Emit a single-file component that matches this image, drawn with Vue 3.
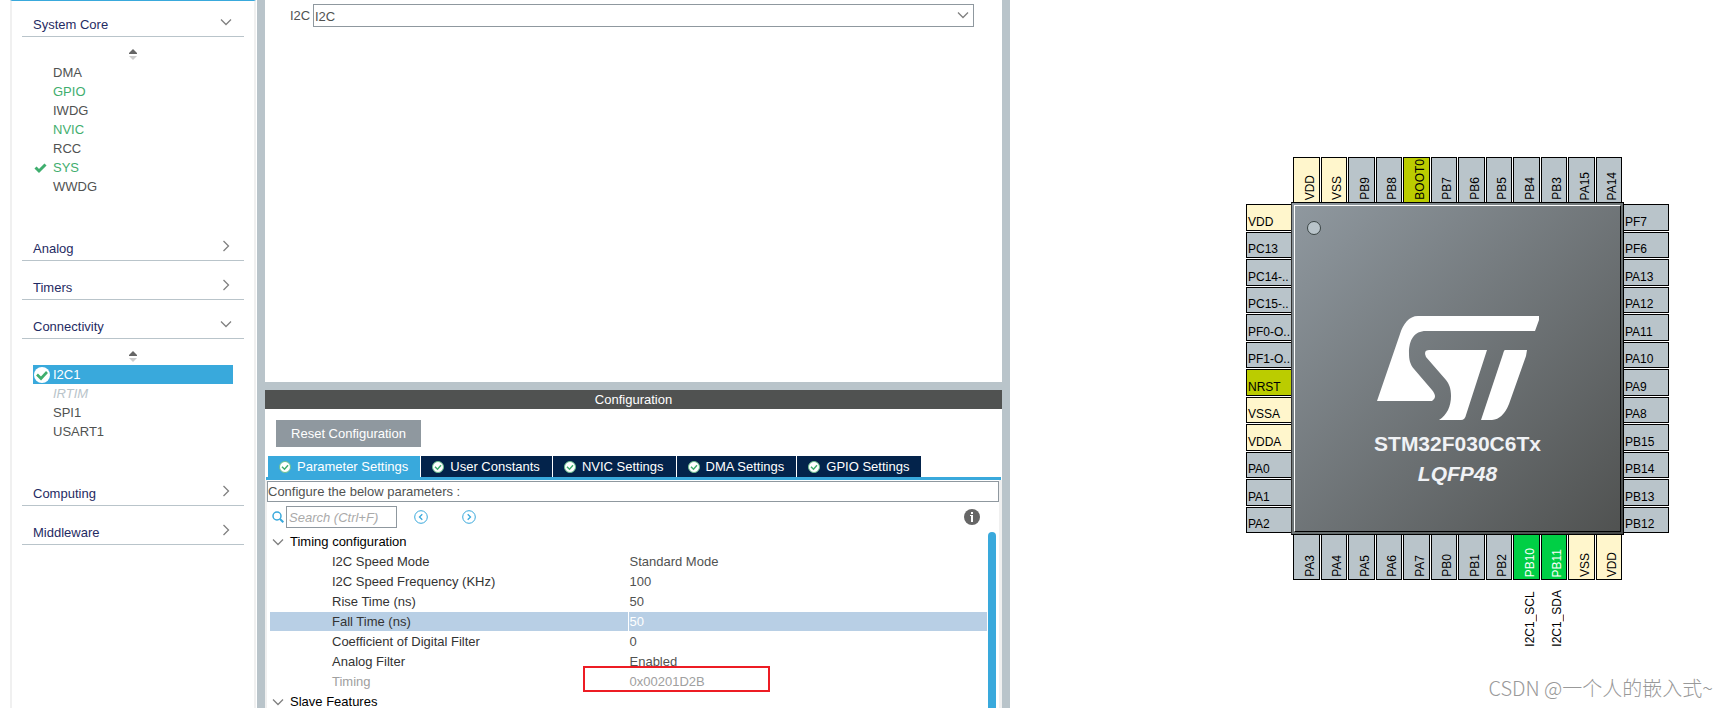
<template>
  <div class="workspace">
    <!-- Peripheral categories -->
    <nav class="sidebar">
      <section v-for="group in groups" :key="group.name" class="group">
        <button type="button" class="group-header" @click="group.open = !group.open">
          <span>{{ group.name }}</span>
          <svg class="chevron" :class="{ closed: !group.open }" width="12" height="12" viewBox="0 0 12 12">
            <path d="M1 3.5L6 8.5L11 3.5" />
          </svg>
        </button>
        <div v-if="group.open" class="group-body">
          <svg class="sorter" width="8" height="11" viewBox="0 0 8 11">
            <path d="M4 0L8 4V5H0V4Z" fill="#666" />
            <path d="M0 7H8L4 11Z" fill="#ccc" />
          </svg>
          <ul>
            <li v-for="item in group.items" :key="item.name">
              <button type="button" class="item" :class="item.state">
                <span class="item-icon">
                  <svg v-if="item.state === 'active'" width="16" height="16" viewBox="0 0 16 16">
                    <circle cx="8" cy="8" r="8" fill="#fff" />
                    <path d="M3 7.5L7 11.5L13 5" fill="none" stroke="#3fae6e" stroke-width="2.6" />
                  </svg>
                  <svg v-else-if="item.checked" width="16" height="16" viewBox="0 0 16 16">
                    <path d="M1.5 7.5L5 11L11.5 4.5" fill="none" stroke="#3fae6e" stroke-width="3" />
                  </svg>
                </span>
                {{ item.name }}
              </button>
            </li>
          </ul>
        </div>
      </section>
    </nav>

    <div class="divider"></div>

    <main class="center">
      <!-- Mode -->
      <section class="mode">
        <label for="mode-select">I2C</label>
        <div class="select-wrap">
          <select id="mode-select" v-model="mode">
            <option>Disable</option>
            <option>I2C</option>
            <option>SMBus-Alert-mode</option>
          </select>
          <svg class="chevron select-arrow" width="12" height="12" viewBox="0 0 12 12">
            <path d="M1 3.5L6 8.5L11 3.5" />
          </svg>
        </div>
      </section>

      <div class="divider"></div>

      <!-- Configuration -->
      <section class="config">
        <h2>Configuration</h2>
        <button type="button" class="reset">Reset Configuration</button>
        <div class="tabs" role="tablist">
          <button
            v-for="tab in tabs"
            :key="tab"
            type="button"
            role="tab"
            class="tab"
            :class="{ selected: tab === currentTab }"
            :aria-selected="tab === currentTab"
            @click="currentTab = tab"
          >
            <svg width="12" height="12" viewBox="0 0 12 12">
              <circle cx="6" cy="6" r="5.5" fill="#fff" stroke="#6cc08f" />
              <path d="M3 5.8L5.5 8.2L9 4.3" fill="none" stroke="#3fae6e" stroke-width="1.5" />
            </svg>
            {{ tab }}
          </button>
        </div>

        <div class="panel">
          <p class="hint">Configure the below parameters :</p>
          <div class="toolbar">
            <label for="param-search" aria-label="Search">
              <svg width="12" height="12" viewBox="0 0 12 12" fill="none" stroke="#39a9dc">
                <circle cx="5" cy="5" r="4" stroke-width="1.5" />
                <path d="M8 8L11.3 11.3" stroke-width="2" />
              </svg>
            </label>
            <input id="param-search" v-model="search" type="text" placeholder="Search (Ctrl+F)" />
            <button type="button" class="step" aria-label="Previous">
              <svg width="14" height="14" viewBox="0 0 14 14" fill="none" stroke="#39a9dc">
                <circle cx="7" cy="7" r="6.3" />
                <path d="M8.3 4.3L5.5 7L8.3 9.7" stroke-width="1.3" />
              </svg>
            </button>
            <button type="button" class="step" aria-label="Next">
              <svg width="14" height="14" viewBox="0 0 14 14" fill="none" stroke="#39a9dc">
                <circle cx="7" cy="7" r="6.3" />
                <path d="M5.7 4.3L8.5 7L5.7 9.7" stroke-width="1.3" />
              </svg>
            </button>
            <button type="button" class="info" aria-label="Information">
              <svg width="16" height="16" viewBox="0 0 16 16">
                <circle cx="8" cy="8" r="8" fill="#666" />
                <path d="M7 3H9V5H7ZM6 6H9V13H7V7H6Z" fill="#fff" />
              </svg>
            </button>
          </div>

          <div class="tree">
            <table>
              <colgroup>
                <col class="half" />
                <col class="half" />
              </colgroup>
              <tbody>
                <tr>
                  <th colspan="2">
                    <div class="category">
                      <svg class="chevron" width="12" height="12" viewBox="0 0 12 12"><path d="M1 3.5L6 8.5L11 3.5" /></svg>
                      Timing configuration
                    </div>
                  </th>
                </tr>
                <tr v-for="param in params" :key="param.name" :class="param.state">
                  <td>{{ param.name }}</td>
                  <td>
                    {{ param.value }}
                    <span v-if="param.marked" class="marker"></span>
                  </td>
                </tr>
                <tr>
                  <th colspan="2">
                    <div class="category">
                      <svg class="chevron" width="12" height="12" viewBox="0 0 12 12"><path d="M1 3.5L6 8.5L11 3.5" /></svg>
                      Slave Features
                    </div>
                  </th>
                </tr>
              </tbody>
            </table>
            <div class="scroll-thumb"></div>
          </div>
        </div>
      </section>
    </main>

    <div class="divider"></div>

    <!-- Pinout view -->
    <section class="pinout">
      <div class="chip">
        <div class="pins top">
          <div v-for="(pin, i) in topPins" :key="i" class="pin" :class="pinClass(pin)">
            <span>{{ pin }}</span>
          </div>
        </div>
        <div class="pins left">
          <div v-for="(pin, i) in leftPins" :key="i" class="pin" :class="pinClass(pin)">
            <span>{{ pin }}</span>
          </div>
        </div>
        <div class="body">
          <div class="face">
            <span class="pin-one"></span>
            <svg class="logo" width="162" height="104" viewBox="0 0 162 104" fill="#fff">
              <path d="M41 0H162V4L158 15H49C37 15 32 24 32 37C32 44 33 48 37 53L55 74C59 79 59 82 55 85H0L23 18C26 8 32 0 41 0Z" />
              <path d="M52 34H110L89 99Q88 104 84 104H62C70 99 74 90 74 80C74 72 72 68 69 64L49 41Q46 34 52 34Z" />
              <path d="M128 34H150L149 40L132 88Q126 103 115 104H104L126 38Q127 34 128 34Z" />
            </svg>
            <strong>STM32F030C6Tx</strong>
            <strong class="package">LQFP48</strong>
          </div>
        </div>
        <div class="pins right">
          <div v-for="(pin, i) in rightPins" :key="i" class="pin" :class="pinClass(pin)">
            <span>{{ pin }}</span>
          </div>
        </div>
        <div class="pins bottom">
          <div v-for="(pin, i) in bottomPins" :key="i" class="pin" :class="pinClass(pin)">
            <span>{{ pin }}</span>
          </div>
        </div>
        <div class="signals">
          <div v-for="(pin, i) in bottomPins" :key="i" class="signal">
            <span>{{ signals[pin] }}</span>
          </div>
        </div>
      </div>
      <div class="watermark">CSDN @一个人的嵌入式~</div>
    </section>
  </div>
</template>

<script setup>
import { ref, reactive } from 'vue'

const groups = reactive([
  {
    name: 'System Core',
    open: true,
    items: [
      { name: 'DMA' },
      { name: 'GPIO', state: 'enabled' },
      { name: 'IWDG' },
      { name: 'NVIC', state: 'enabled' },
      { name: 'RCC' },
      { name: 'SYS', state: 'enabled', checked: true },
      { name: 'WWDG' }
    ]
  },
  { name: 'Analog', open: false, items: [] },
  { name: 'Timers', open: false, items: [] },
  {
    name: 'Connectivity',
    open: true,
    items: [
      { name: 'I2C1', state: 'active' },
      { name: 'IRTIM', state: 'unavailable' },
      { name: 'SPI1' },
      { name: 'USART1' }
    ]
  },
  { name: 'Computing', open: false, items: [] },
  { name: 'Middleware', open: false, items: [] }
])

const mode = ref('I2C')
const search = ref('')

const tabs = ['Parameter Settings', 'User Constants', 'NVIC Settings', 'DMA Settings', 'GPIO Settings']
const currentTab = ref('Parameter Settings')

const params = [
  { name: 'I2C Speed Mode', value: 'Standard Mode' },
  { name: 'I2C Speed Frequency (KHz)', value: '100' },
  { name: 'Rise Time (ns)', value: '50' },
  { name: 'Fall Time (ns)', value: '50', state: 'current' },
  { name: 'Coefficient of Digital Filter', value: '0' },
  { name: 'Analog Filter', value: 'Enabled' },
  { name: 'Timing', value: '0x00201D2B', state: 'readonly', marked: true }
]

const topPins = ['VDD', 'VSS', 'PB9', 'PB8', 'BOOT0', 'PB7', 'PB6', 'PB5', 'PB4', 'PB3', 'PA15', 'PA14']
const leftPins = ['VDD', 'PC13', 'PC14-..', 'PC15-..', 'PF0-O..', 'PF1-O..', 'NRST', 'VSSA', 'VDDA', 'PA0', 'PA1', 'PA2']
const rightPins = ['PF7', 'PF6', 'PA13', 'PA12', 'PA11', 'PA10', 'PA9', 'PA8', 'PB15', 'PB14', 'PB13', 'PB12']
const bottomPins = ['PA3', 'PA4', 'PA5', 'PA6', 'PA7', 'PB0', 'PB1', 'PB2', 'PB10', 'PB11', 'VSS', 'VDD']

// pins already assigned to a peripheral
const signals = { PB10: 'I2C1_SCL', PB11: 'I2C1_SDA' }

function pinClass(pin) {
  if (signals[pin]) return 'assigned'
  if (pin.startsWith('V')) return 'power'
  if (pin === 'NRST' || pin === 'BOOT0') return 'system'
  return ''
}
</script>

<style>
body {
  margin: 0;
  background: #fff;
}
</style>

<style scoped>
.workspace {
  display: grid;
  grid-template-columns: 257px 8px minmax(0, 737fr) 8px minmax(0, 717fr);
  grid-template-rows: minmax(0, 1fr);
  height: 100vh;
  overflow: hidden;
  font-family: "Liberation Sans", Arial, sans-serif;
  font-size: 13px;
  line-height: 19px;
  color: #505251;
}

.workspace * {
  box-sizing: border-box;
}

button,
input,
select {
  font: inherit;
  color: inherit;
  border: 0;
  border-radius: 0;
  padding: 0;
  margin: 0;
  background: none;
}

svg {
  display: block;
  flex: none;
}

.divider {
  background: #b9c4ca;
}

.chevron {
  fill: none;
  stroke: #808080;
  stroke-width: 1.3;
}

.chevron.closed {
  transform: rotate(-90deg);
}

/* Sidebar */
.sidebar {
  display: flex;
  flex-direction: column;
  gap: 14px;
  margin: 0 1px 0 10px;
  padding: 11px 10px 0;
  border: 2px solid #f0f0f0;
  border-top: 1px solid #39a9dc;
  border-bottom: 0;
}

.group-header {
  display: flex;
  align-items: center;
  justify-content: space-between;
  width: 100%;
  height: 25px;
  padding: 0 12px 0 11px;
  border-bottom: 1px solid #b9c4ca;
  color: #1f2b63;
}

.group-header .chevron {
  margin-bottom: 4px;
}

.group-body {
  padding: 12px 11px 26px;
}

.sorter {
  margin: 0 auto 3px;
}

.group-body ul {
  list-style: none;
  margin: 0;
  padding: 0;
}

.item {
  display: flex;
  align-items: center;
  width: 100%;
  height: 19px;
}

.item-icon {
  width: 20px;
  padding-left: 1px;
}

.item.enabled {
  color: #3fae6e;
}

.item.active {
  background: #39a9dc;
  color: #fff;
}

.item.unavailable {
  color: #b9c4ca;
  font-style: italic;
}

/* Center column */
.center {
  display: grid;
  grid-template-rows: minmax(0, 382fr) 8px minmax(0, 318fr);
}

.mode {
  display: flex;
  align-items: flex-start;
  padding: 4px 28px 0 25px;
  line-height: 23px;
}

.mode label {
  width: 23px;
}

.select-wrap {
  position: relative;
  flex: 1;
}

.select-wrap select {
  display: block;
  width: 100%;
  height: 23px;
  padding: 0 1px;
  border: 1px solid #8f989f;
  appearance: none;
}

.select-arrow {
  position: absolute;
  top: 5px;
  right: 5px;
  pointer-events: none;
}

.config {
  display: flex;
  flex-direction: column;
  min-height: 0;
}

.config h2 {
  margin: 0;
  background: #505251;
  color: #fff;
  font-size: 13px;
  font-weight: normal;
  text-align: center;
}

.reset {
  flex: none;
  align-self: flex-start;
  width: 145px;
  height: 27px;
  margin: 11px 11px 9px;
  background: #8f989f;
  color: #fff;
}

.tabs {
  display: flex;
  gap: 1px;
  margin: 0 1px;
  padding-left: 2px;
  border-bottom: 3px solid #39a9dc;
}

.tab {
  display: flex;
  align-items: center;
  gap: 6px;
  height: 21px;
  padding: 0 12px 0 11px;
  background: #03234b;
  color: #fff;
  white-space: nowrap;
}

.tab.selected {
  background: #39a9dc;
}

.panel {
  flex: 1;
  display: flex;
  flex-direction: column;
  min-height: 0;
  padding-top: 1px;
  border: solid #f0f0f0;
  border-width: 0 3px 0 2px;
}

.hint {
  flex: none;
  margin: 0;
  border: 1px solid #8f989f;
}

.toolbar {
  flex: none;
  display: flex;
  align-items: center;
  height: 30px;
  padding: 0 19px 0 5px;
}

.toolbar input {
  width: 111px;
  height: 22px;
  margin: 0 17px 0 2px;
  padding: 0 2px;
  border: 1px solid #8f989f;
}

.toolbar input::placeholder {
  color: #aaa;
  font-style: italic;
}

.step {
  margin-right: 34px;
}

.info {
  margin-left: auto;
}

.tree {
  flex: 1;
  display: flex;
  gap: 1px;
  min-height: 0;
  padding: 0 3px;
}

.tree table {
  flex: 1;
  align-self: flex-start;
  table-layout: fixed;
  border-spacing: 0;
}

.half {
  width: 50%;
}

.tree th,
.tree td {
  position: relative;
  height: 20px;
  padding: 0 0 0 1px;
  border-bottom: 1px solid #fff;
  line-height: 19px;
  text-align: left;
  white-space: nowrap;
}

.category {
  display: flex;
  align-items: center;
  gap: 6px;
  padding-left: 1px;
  color: #000;
  font-weight: normal;
}

.tree td:first-child {
  padding-left: 62px;
  border-right: 1px solid #fff;
  color: #333;
}

.tree .current td {
  background: #b8cfe5;
  background-clip: padding-box;
}

.tree .current td:last-child {
  color: #fff;
}

.tree .readonly td {
  color: #a0a0a0;
}

.marker {
  position: absolute;
  top: -6px;
  left: -46px;
  width: 187px;
  height: 26px;
  border: 2px solid #ed1c24;
}

.scroll-thumb {
  width: 8px;
  border-radius: 4px 4px 0 0;
  background: #39a9dc;
}

/* Pinout */
.pinout {
  position: relative;
  display: flex;
  justify-content: center;
  align-items: flex-start;
  padding: 157px 0 0 178px;
  color: #000;
}

.chip {
  display: grid;
  grid-template-areas:
    ". top ."
    "left body right"
    ". bottom ."
    ". signals .";
  grid-template-columns: 45px 333px 45px;
  grid-template-rows: 45px 333px 45px auto;
  font-size: 12px;
  line-height: 14px;
}

.top {
  grid-area: top;
}

.left {
  grid-area: left;
}

.right {
  grid-area: right;
}

.bottom {
  grid-area: bottom;
}

.signals {
  grid-area: signals;
}

.pins,
.signals {
  display: grid;
  gap: 1px;
}

.top,
.bottom,
.signals {
  grid-template-columns: repeat(12, minmax(0, 1fr));
  padding: 0 2px;
}

.left,
.right {
  grid-template-rows: repeat(12, minmax(0, 1fr));
  padding: 2px 0;
}

.pin {
  display: flex;
  align-items: flex-end;
  border: 1px solid #000;
  background: #b9c4ca;
  white-space: nowrap;
}

.pin.power {
  background: #fff6cc;
}

.pin.system {
  background: #bbcc00;
}

.pin.assigned {
  background: #00cf45;
  color: #fff;
}

.left .pin,
.right .pin {
  padding: 0 0 1px 1px;
}

.left .pin {
  border-right: 0;
}

.right .pin {
  border-left: 0;
}

.top .pin,
.bottom .pin {
  justify-content: flex-end;
  padding: 0 2px 2px 0;
}

.top .pin {
  border-bottom: 0;
}

.bottom .pin {
  border-top: 0;
}

.top span,
.bottom span,
.signal span {
  writing-mode: vertical-rl;
  transform: rotate(180deg);
}

.signals {
  padding-top: 10px;
}

.signal {
  display: flex;
  justify-content: flex-end;
  padding-right: 3px;
}

.body {
  grid-area: body;
  padding: 2px;
  border: 1px solid #000;
  border-left-color: #333;
  background: linear-gradient(135deg, #8f989f, #6d7475 50%, #454746);
}

.face {
  position: relative;
  display: flex;
  flex-direction: column;
  align-items: center;
  height: 100%;
  padding-top: 110px;
  border: 1px solid;
  border-color: #fff #000 #000 #fff;
  background: linear-gradient(135deg, #8f989f, #505251);
  color: #f0f2f5;
  font-size: 21px;
  line-height: 30px;
}

.pin-one {
  position: absolute;
  top: 15px;
  left: 12px;
  width: 14px;
  height: 14px;
  border: 1px solid #3a4444;
  border-radius: 50%;
  background: #b9c4ca;
}

.logo {
  margin-bottom: 9px;
}

.package {
  font-style: italic;
}

.watermark {
  position: absolute;
  right: 14px;
  bottom: 6px;
  color: #999;
  font-family: "Noto Sans CJK SC", sans-serif;
  font-size: 20px;
  font-weight: 300;
  line-height: 28px;
}
</style>
